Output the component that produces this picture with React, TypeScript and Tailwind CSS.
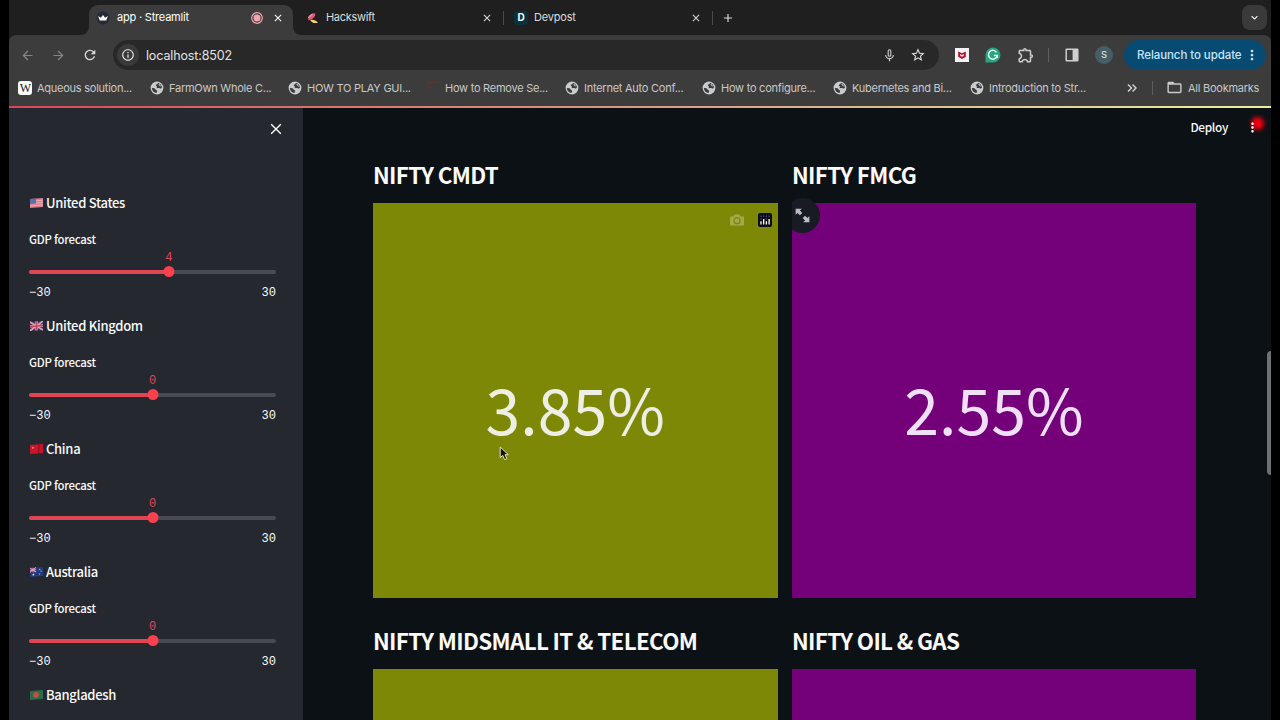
import type { ReactNode } from "react";
import {
  MdArrowBack,
  MdArrowForward,
  MdRefresh,
  MdMicNone,
  MdStarBorder,
  MdOutlineExtension,
  MdMoreVert,
  MdClose,
  MdAdd,
  MdFolderOpen,
  MdInfoOutline,
  MdExpandMore,
} from "react-icons/md";

const SOURCE = "font-['Noto_Sans_CJK_JP',sans-serif]";

function Globe() {
  return (
    <svg viewBox="0 0 14 14" className="size-[14px] shrink-0">
      <circle cx="7" cy="7" r="6.4" fill="#c9cbcc" />
      <path
        d="M1.9 7 C3.6 7 5 7.2 5.4 8.2 C5.8 9.3 7.4 9 7.2 10.2 L6.4 12 C4 11.8 1.9 9.8 1.9 7 Z M5.6 4 C7.2 3.8 7 2.4 8.4 2.1 C10.4 2.8 11.9 4.6 12 6.8 L10.6 7.6 C9.8 8 9.6 6.8 8.6 7.1 C7.2 7.4 6.2 6.6 6.8 5.8 C7.4 5 5.6 4.8 5.6 4 Z"
        fill="#3c3c3c"
      />
      <path d="M8.8 3 C9 4 10.4 4 10.2 5.4" stroke="#c9cbcc" strokeWidth="1.1" fill="none" />
    </svg>
  );
}

function WikiIcon() {
  return (
    <span className="flex size-[14px] shrink-0 items-center justify-center rounded-[3px] bg-white font-['Liberation_Serif',serif] text-[12px] leading-none tracking-tighter text-[#111]">
      W
    </span>
  );
}

function RedMark() {
  return (
    <svg viewBox="0 0 14 14" className="size-[14px] shrink-0">
      <path d="M1 1.5 H12 M2.5 1.5 C2.5 5 2.5 9 6 11" stroke="#6d2d31" strokeWidth="1.2" fill="none" opacity=".7" />
    </svg>
  );
}

function Bookmark({ icon, label, width }: { icon: ReactNode; label: string; width: string }) {
  return (
    <div className={`flex shrink-0 items-center gap-[5px] ${width}`}>
      {icon}
      <span className="pt-px">{label}</span>
    </div>
  );
}

function TabStrip() {
  return (
    <div className="flex h-[35px] shrink-0 items-end bg-[#1f1f1f] pl-[71px] text-[11px] tracking-[-0.2px] text-[#dcdcdc]">
      <svg viewBox="0 0 9 9" className="size-[9px] shrink-0">
        <path d="M9 0 V9 H0 C6 9 9 5 9 0 Z" fill="#3c3c3c" />
      </svg>
      <div className="flex h-[30px] w-[204px] shrink-0 items-center rounded-t-[9px] bg-[#3c3c3c] pr-[8px] pb-[5px] pl-[7px]">
        <svg viewBox="0 0 14 14" className="size-[14px]">
          <circle cx="7" cy="7" r="6.4" fill="#252a3a" />
          <path d="M2 4.9 L4.8 6.8 L7 4 L9.2 6.8 L12 4.9 L10.2 9.6 H3.8 Z" fill="#fff" />
        </svg>
        <span className="ml-[7px] flex-1 text-white">app · Streamlit</span>
        <svg viewBox="0 0 14 14" className="mr-[8px] size-[14px]">
          <circle cx="7" cy="7" r="5.3" fill="none" stroke="#f2a6ae" strokeWidth="1.2" />
          <circle cx="7" cy="7" r="3.5" fill="#f2a6ae" />
        </svg>
        <MdClose className="mr-px size-[12px] text-white" />
      </div>
      <svg viewBox="0 0 9 9" className="size-[9px] shrink-0">
        <path d="M0 0 V9 H9 C3 9 0 5 0 0 Z" fill="#3c3c3c" />
      </svg>
      <div className="flex h-[35px] w-[201px] items-center pl-[4px]">
        <svg viewBox="0 0 14 14" className="size-[14px]">
          <path d="M2.2 9.6 C2.2 5.4 5 3 9.3 2.2 C9.8 5.5 7 7.8 2.2 9.6 Z" fill="#ec5568" />
          <path d="M1.6 7.6 C2.4 4.4 4.8 2.6 8 2.2 C6.4 4.4 4.4 6.4 1.6 7.6 Z" fill="#f08ac0" />
          <path d="M4.2 9 C7.4 8.4 10 9.6 12 11.8 C9 12.6 5.8 12 4.2 9 Z" fill="#f3d36b" />
        </svg>
        <span className="ml-[6px] flex-1 tracking-[-0.3px]">Hackswift</span>
        <MdClose className="mr-[10px] size-[12px]" />
      </div>
      <div className="mb-[10px] h-[14px] w-px bg-[#4a4a4a]" />
      <div className="flex h-[35px] w-[208px] items-center pl-[10px]">
        <span className="flex size-[14px] items-center justify-center rounded-[4px] bg-[#07323e] text-[10px] font-bold text-white">
          D
        </span>
        <span className="ml-[6px] flex-1">Devpost</span>
        <MdClose className="mr-[10px] size-[12px]" />
      </div>
      <div className="mb-[10px] h-[14px] w-px bg-[#4a4a4a]" />
      <div className="flex h-[35px] flex-1 items-center justify-between pr-[4px] pl-[8px]">
        <MdAdd className="size-[14px]" />
        <span className="flex size-[25px] items-center justify-center rounded-[8px] bg-[#3a3a3a]">
          <MdExpandMore className="size-[13px] text-white" />
        </span>
      </div>
    </div>
  );
}

function Toolbar() {
  return (
    <div className="flex h-[40px] shrink-0 items-center rounded-t-[7px] bg-[#3c3c3c] pr-[5px] pl-[11px]">
      <MdArrowBack className="size-[15px] text-[#858585]" />
      <MdArrowForward className="ml-[16px] size-[15px] text-[#858585]" />
      <MdRefresh className="ml-[16px] size-[16px] text-[#d6d6d6]" />
      <div className="ml-[15px] flex h-[30px] w-[827px] items-center rounded-full bg-[#282828] pr-[13px] pl-[4px]">
        <span className="flex size-[22px] items-center justify-center rounded-full bg-[#3a3a3a]">
          <MdInfoOutline className="size-[14px] text-[#e6e6e6]" />
        </span>
        <span className="ml-[7px] flex-1 pt-[2px] text-[12.5px] tracking-[-0.12px] text-[#e3e3e3]">localhost:8502</span>
        <MdMicNone className="size-[15px] text-[#d0d0d0]" />
        <MdStarBorder className="ml-[13px] size-[16px] text-[#e0e0e0]" />
      </div>
      <svg viewBox="0 0 14 14" className="ml-[16px] size-[14px]">
        <rect width="14" height="14" fill="#f5f3f3" />
        <path d="M3.2 3.4 L7 5.2 L10.8 3.4 V8.8 L7 11 L3.2 8.8 Z" fill="#b0122e" />
        <path d="M5.2 6 L7 7 L8.8 6 V7.8 L7 8.8 L5.2 7.8 Z" fill="#f5f3f3" />
      </svg>
      <svg viewBox="0 0 16 16" className="ml-[16px] size-[16px]">
        <path d="M8 .5 A7.5 7.5 0 1 1 8 15.5 H.5 V8 A7.5 7.5 0 0 1 8 .5 Z" fill="#27a57e" />
        <path
          d="M11.6 5.4 A4.4 4.4 0 1 0 12.2 8.6 H8.9 M12.4 8.6 V11"
          fill="none"
          stroke="#e8f5f0"
          strokeWidth="1.5"
        />
      </svg>
      <MdOutlineExtension className="ml-[16px] size-[18px] text-[#cfcfcf]" />
      <div className="ml-[13px] h-[14px] w-px bg-[#606060]" />
      <svg viewBox="0 0 14 14" className="ml-[16px] size-[14px]">
        <rect x="1.2" y="1.2" width="11.6" height="11.6" rx=".5" fill="none" stroke="#cfcfcf" strokeWidth="1.5" />
        <rect x="7.6" y="1" width="5.4" height="12" fill="#cfcfcf" />
      </svg>
      <span className="ml-[16px] flex size-[18px] items-center justify-center rounded-full bg-[#455f69] pt-px text-[9.5px] text-[#e5eef2]">
        S
      </span>
      <div className="ml-[11px] flex h-[30px] w-[142px] shrink-0 items-center rounded-full bg-[#074b72] pl-[13px] text-[11.5px] font-medium tracking-[-0.08px] text-[#c6e7ff]">
        <span className="w-[107px] pt-[2px] whitespace-nowrap">Relaunch to update</span>
        <MdMoreVert className="size-[16px]" />
      </div>
    </div>
  );
}

function BookmarkBar() {
  return (
    <div className="flex h-[31px] shrink-0 items-center bg-[#3c3c3c] pb-[6px] pl-[9px] text-[11px] tracking-[-0.25px] whitespace-nowrap text-[#c9c9c9]">
      <Bookmark icon={<WikiIcon />} label="Aqueous solution..." width="w-[132px]" />
      <Bookmark icon={<Globe />} label="FarmOwn Whole C..." width="w-[138px]" />
      <Bookmark icon={<Globe />} label="HOW TO PLAY GUI..." width="w-[138px]" />
      <Bookmark icon={<RedMark />} label="How to Remove Se..." width="w-[139px]" />
      <Bookmark icon={<Globe />} label="Internet Auto Conf..." width="w-[137px]" />
      <Bookmark icon={<Globe />} label="How to configure..." width="w-[131px]" />
      <Bookmark icon={<Globe />} label="Kubernetes and Bi..." width="w-[137px]" />
      <Bookmark icon={<Globe />} label="Introduction to Str..." width="w-[157px]" />
      <svg viewBox="0 0 10 10" className="size-[10px]">
        <path d="M1 1.5 L4.5 5 L1 8.5 M5.5 1.5 L9 5 L5.5 8.5" fill="none" stroke="#d6d6d6" strokeWidth="1.4" />
      </svg>
      <div className="ml-[15px] h-[14px] w-px bg-[#5c5c5c]" />
      <MdFolderOpen className="ml-[13px] size-[17px]" />
      <span className="ml-[5px] pt-px">All Bookmarks</span>
    </div>
  );
}

const flags: Record<string, ReactNode> = {
  us: (
    <>
      <rect width="13" height="9" fill="#dd7f90" />
      <path d="M0 2.2 H13 M0 4.6 H13 M0 7 H13" stroke="#e9b3bf" strokeWidth=".9" />
      <rect width="6" height="5" fill="#5b6fa8" />
    </>
  ),
  gb: (
    <>
      <rect width="13" height="9" fill="#3d3a62" />
      <path d="M0 0 L13 9 M13 0 L0 9" stroke="#d9a5b8" strokeWidth="1.7" />
      <path d="M6.5 0 V9 M0 4.5 H13" stroke="#e6b3c2" strokeWidth="2.4" />
      <path d="M6.5 0 V9 M0 4.5 H13" stroke="#cf3f5c" strokeWidth="1.5" />
    </>
  ),
  cn: (
    <>
      <rect width="13" height="9" fill="#c8152c" />
      <path d="M8.6 0 C9.6 3 8 6 9 9" stroke="#97101f" strokeWidth="1.4" fill="none" />
      <circle cx="2.8" cy="3" r="1" fill="#ee8a60" />
    </>
  ),
  au: (
    <>
      <rect width="13" height="9" fill="#233a80" />
      <path d="M0 0 L6 4.5 M6 0 L0 4.5 M3 0 V4.5 M0 2.3 H6" stroke="#e79aae" strokeWidth="1" />
      <circle cx="3.4" cy="7" r=".9" fill="#e6e9f5" />
      <circle cx="9.8" cy="2.2" r=".6" fill="#bcc8ea" />
      <circle cx="11.2" cy="4" r=".6" fill="#bcc8ea" />
      <circle cx="9.6" cy="6.8" r=".6" fill="#bcc8ea" />
    </>
  ),
  bd: (
    <>
      <rect width="13" height="9" fill="#2a6a4d" />
      <circle cx="6" cy="4.5" r="2.9" fill="#c2503f" />
    </>
  ),
};

function Flag({ code }: { code: string }) {
  return (
    <svg viewBox="0 0 13 10" className="mr-[3px] mb-px ml-px h-[10px] w-[13px]">
      <g transform="skewY(-4) translate(0 .9)">{flags[code]}</g>
    </svg>
  );
}

function CountryName({ code, name }: { code: string; name: string }) {
  return (
    <div className="flex h-[24px] shrink-0 items-center text-[13px] leading-[24px] font-medium tracking-[-0.3px] text-[#fafafa]">
      <Flag code={code} />
      <span>{name}</span>
    </div>
  );
}

function Country({ code, name, value }: { code: string; name: string; value: number }) {
  const center = `${((value + 30) / 60) * 100}%`;
  return (
    <section className="flex h-[123px] shrink-0 flex-col">
      <CountryName code={code} name={name} />
      <div className="mt-[14px] h-[20px] text-[11.4px] leading-[20px] font-medium tracking-[-0.25px] text-[#fafafa]">
        GDP forecast
      </div>
      <div className="relative h-[30px] pt-[21px]">
        <div className="h-[4px] rounded-full bg-[#494a53]">
          <div className="h-full rounded-full bg-[#df4553]" style={{ width: center }} />
        </div>
        <div
          className="absolute top-[17px] size-[11px] -translate-x-1/2 rounded-full bg-[#fa3f4e]"
          style={{ left: center }}
        />
        <div
          className="absolute top-[2px] -translate-x-1/2 font-['Liberation_Mono',monospace] text-[12px] leading-[15px] text-[#e0455a]"
          style={{ left: center }}
        >
          {value}
        </div>
      </div>
      <div className="mt-[6px] flex h-[16px] justify-between font-['Liberation_Mono',monospace] text-[12px] leading-[16px] text-[#fafafa]">
        <span>−30</span>
        <span>30</span>
      </div>
    </section>
  );
}

function Sidebar() {
  return (
    <aside className={`flex w-[294px] shrink-0 flex-col overflow-hidden bg-[#25282f] pr-[27px] pl-[20px] ${SOURCE}`}>
      <div className="-mr-[6px] flex h-[83px] shrink-0 items-start justify-end pt-[15px]">
        <svg viewBox="0 0 12 12" className="size-[12px]">
          <path d="M1.2 1.2 L10.8 10.8 M10.8 1.2 L1.2 10.8" stroke="#fff" strokeWidth="1.4" />
        </svg>
      </div>
      <Country code="us" name="United States" value={4} />
      <Country code="gb" name="United Kingdom" value={0} />
      <Country code="cn" name="China" value={0} />
      <Country code="au" name="Australia" value={0} />
      <CountryName code="bd" name="Bangladesh" />
    </aside>
  );
}

function Metric({
  title,
  value,
  tone,
  children,
}: {
  title: string;
  value?: string;
  tone: string;
  children?: ReactNode;
}) {
  return (
    <div className="flex h-[466px] flex-col">
      <h3 className="h-[46px] text-[22.4px] leading-[35px] font-bold tracking-[-0.68px] whitespace-nowrap text-[#fafafa]">
        {title}
      </h3>
      <div className={`relative flex h-[395px] items-center justify-center ${tone}`}>
        {value && <span className="mt-[14px] text-[62.6px] leading-[80px]">{value}</span>}
        {children}
      </div>
    </div>
  );
}

function Cursor() {
  return (
    <svg viewBox="0 0 12 16" className="absolute top-[243px] left-[126px] h-[16px] w-[12px]">
      <path
        d="M1.2 1 V11.6 L3.8 9.4 L5.6 13.6 L7.8 12.7 L6 8.7 H9.4 Z"
        fill="#15140c"
        stroke="#e4e5bd"
        strokeWidth="1"
      />
    </svg>
  );
}

function Modebar() {
  return (
    <div className="absolute top-[9.5px] right-[5.5px] flex items-center gap-[13px]">
      <svg viewBox="0 0 16 14" className="h-[14px] w-[16px]">
        <path
          d="M2 3.4 H4.4 L5.6 1.6 H10.4 L11.6 3.4 H14 Q15 3.4 15 4.4 V11.4 Q15 12.4 14 12.4 H2 Q1 12.4 1 11.4 V4.4 Q1 3.4 2 3.4 Z"
          fill="#a3aa4a"
        />
        <circle cx="8" cy="7.7" r="3" fill="none" stroke="#7e8807" strokeWidth="1.3" />
      </svg>
      <svg viewBox="0 0 14 14" className="size-[14px]">
        <rect width="14" height="14" rx="2" fill="#0c0c14" />
        <path d="M3 8.2 V11.6 M5.7 6 V11.6 M8.4 8.2 V11.6 M11.1 6 V11.6" stroke="#fff" strokeWidth="1.3" />
        <path
          d="M3 5.4 V6.6 M3 2.6 V3.8 M5.7 2.6 V3.8 M8.4 2.6 V3.8 M8.4 5.4 V6.6 M11.1 2.6 V3.8"
          stroke="#6a629c"
          strokeWidth="1"
        />
      </svg>
    </div>
  );
}

function Expand() {
  return (
    <div className="absolute top-[-5px] left-0 h-[35px] w-[28px] overflow-hidden">
      <div className="-ml-[7px] flex size-[35px] items-center justify-center rounded-full bg-[#181b24]">
        <svg viewBox="0 0 14 14" className="mr-px size-[15px]">
          <path d="M.6 .6 H6.4 L4.6 2.4 L6.8 4.6 L4.6 6.8 L2.4 4.6 L.6 6.4 Z" fill="#b9bcc2" />
          <path d="M13.4 13.4 H7.6 L9.4 11.6 L7.2 9.4 L9.4 7.2 L11.6 9.4 L13.4 7.6 Z" fill="#b9bcc2" />
        </svg>
      </div>
    </div>
  );
}

function Main() {
  return (
    <main className={`relative flex-1 overflow-hidden bg-[#0c1115] ${SOURCE}`}>
      <div className="flex h-[49px] items-start justify-end pt-[9px] pr-[11px]">
        <span className="text-[11.8px] leading-[20px] font-medium tracking-[-0.32px] text-[#fafafa]">Deploy</span>
        <div className="relative ml-[17px] size-[15px] pt-[3px]">
          <span className="absolute top-0 left-[6px] size-[13px] rounded-full bg-[#f4000f] blur-[2px]" />
          <MdMoreVert className="relative size-[15px] text-white" />
        </div>
      </div>
      <div className="grid grid-cols-[404.5px_404px] gap-x-[14.5px] pl-[70px]">
        <Metric title="NIFTY CMDT" value="3.85%" tone="bg-[#7e8807] text-[#eeeee4]">
          <Modebar />
          <Cursor />
        </Metric>
        <Metric title="NIFTY FMCG" value="2.55%" tone="bg-[#74007a] text-[#f0e0f7]">
          <Expand />
        </Metric>
        <Metric title="NIFTY MIDSMALL IT & TELECOM" tone="bg-[#7e8807]" />
        <Metric title="NIFTY OIL & GAS" tone="bg-[#74007a]" />
      </div>
      <div className="absolute top-[243px] right-0 h-[124px] w-[4px] rounded-l-full bg-[#6d7174]" />
    </main>
  );
}

export default function App() {
  return (
    <div className="flex h-[720px] w-[1280px] flex-col overflow-hidden bg-black px-[9px] font-['Inter',sans-serif]">
      <div className="flex shrink-0 flex-col bg-[#1f1f1f]">
        <TabStrip />
        <Toolbar />
        <BookmarkBar />
      </div>
      <div className="h-[2px] shrink-0 bg-linear-to-r from-[#d9455a] via-[#d79a86] to-[#e9f0a0]" />
      <div className="flex min-h-0 flex-1">
        <Sidebar />
        <Main />
      </div>
    </div>
  );
}
